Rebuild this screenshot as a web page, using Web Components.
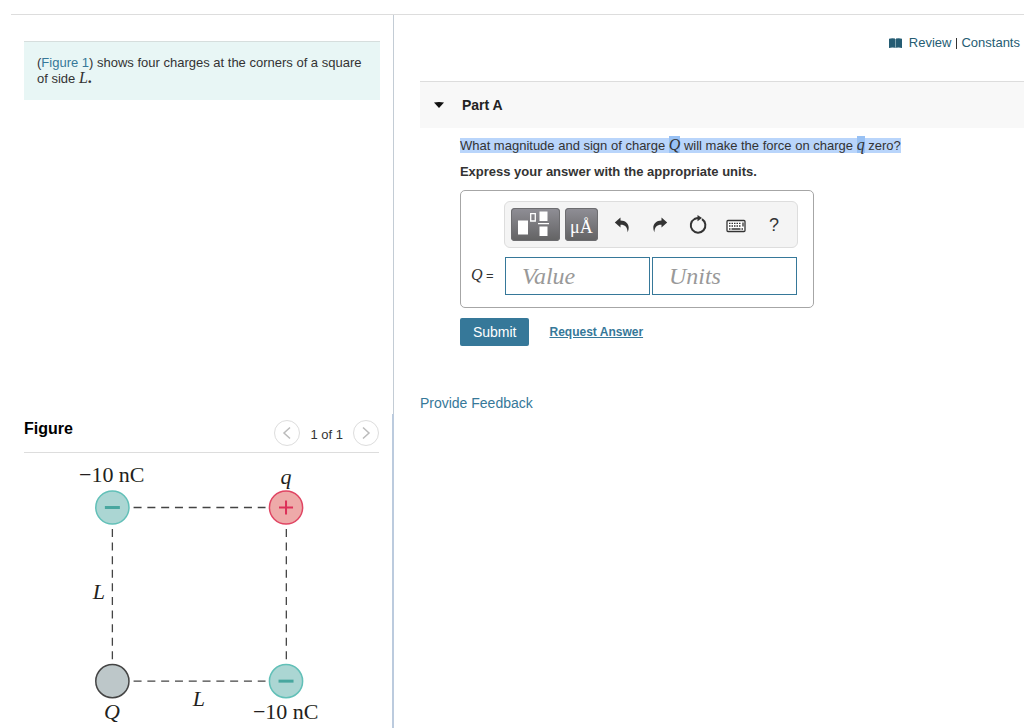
<!DOCTYPE html>
<html lang="en">
<head>
<meta charset="utf-8">
<meta name="viewport" content="width=device-width, initial-scale=1">
<title>Part A</title>
<style>
	body {
		margin: 0;
		background: #fff;
		color: #333;
		font: 13px/16px "Liberation Sans", Arial, sans-serif;
	}
	a {
		color: #367899;
		text-decoration: none;
	}
</style>
</head>
<body>
<problem-page>
	<intro-box slot="intro">(<a href="#figure">Figure 1</a>) shows four charges at the corners of a square of side <math-var>L</math-var><math-var upright>.</math-var></intro-box>
	<figure-panel slot="figure" id="figure" heading="Figure" page="1" total="1">
		<charge-diagram></charge-diagram>
	</figure-panel>
	<page-tools></page-tools>
	<part-section heading="Part A">
		<selected-text slot="question">What magnitude and sign of charge <math-var selected>Q</math-var> will make the force on charge <math-var selected>q</math-var> zero?</selected-text>
		<span slot="instructions">Express your answer with the appropriate units.</span>
		<answer-form variable="Q"></answer-form>
	</part-section>
	<feedback-link>Provide Feedback</feedback-link>
</problem-page>

<script>
class ProblemPage extends HTMLElement {
	constructor() {
		super();
		this.attachShadow({ mode: 'open' });
		this.shadowRoot.innerHTML = `
			<style>
				:host {
					display: grid;
					grid-template-columns: minmax(380px, 37.8%) minmax(0, 1fr);
					box-sizing: border-box;
					min-height: calc(100vh - 14px);
					margin: 14px 0 0 11px;
					border-top: 1px solid #ddd;
				}
				aside {
					display: flex;
					flex-direction: column;
				}
				#intro {
					flex: 1;
					padding: 26px 13px;
					border-right: 1px solid #c3ccd5;
				}
				#figure {
					padding: 0 13px;
					border-right: 2px solid #bccbde;
				}
				main {
					padding-left: 26px;
				}
			</style>
			<aside>
				<div id="intro"><slot name="intro"></slot></div>
				<div id="figure"><slot name="figure"></slot></div>
			</aside>
			<main><slot></slot></main>
		`;
	}
}

class IntroBox extends HTMLElement {
	constructor() {
		super();
		this.attachShadow({ mode: 'open' });
		this.shadowRoot.innerHTML = `
			<style>
				:host {
					display: block;
					padding: 13px;
					border-top: 1px solid #d6dedd;
					background: #e8f6f5;
				}
			</style>
			<slot></slot>
		`;
	}
}

class MathVar extends HTMLElement {
	constructor() {
		super();
		this.attachShadow({ mode: 'open' });
		// no whitespace round the slot: it would show inside a sentence
		this.shadowRoot.innerHTML = `<style>
				:host {
					display: inline;
					font-family: "Liberation Serif", "Times New Roman", serif;
					font-size: 16px;
					font-style: italic;
					line-height: 1px;
				}
				:host([upright]) {
					font-style: normal;
					font-weight: bold;
				}
				:host([selected]) {
					background: #98c1f4;
				}
			</style><slot></slot>`;
	}
}

class SelectedText extends HTMLElement {
	constructor() {
		super();
		this.attachShadow({ mode: 'open' });
		this.shadowRoot.innerHTML = `<style>
				:host {
					display: inline;
					background: #b9d5fb;
				}
			</style><slot></slot>`;
	}
}

class FigurePanel extends HTMLElement {
	constructor() {
		super();
		this.attachShadow({ mode: 'open' });
		this.shadowRoot.innerHTML = `
			<style>
				:host {
					display: block;
				}
				header {
					display: flex;
					align-items: center;
					justify-content: space-between;
					padding: 6px 0;
					border-bottom: 1px solid #ddd;
				}
				h2 {
					margin: 0 0 8px;
					color: #000;
					font-size: 16px;
					line-height: 18px;
				}
				nav {
					display: flex;
					align-items: center;
					gap: 10px;
				}
				button {
					display: grid;
					place-items: center;
					width: 26px;
					height: 26px;
					padding: 0;
					border: 1px solid #ddd;
					border-radius: 50%;
					background: #fff;
				}
				svg {
					width: 12px;
					height: 14px;
					fill: none;
					stroke: #bbb;
					stroke-width: 1.5;
				}
				span {
					padding-top: 3px;
				}
			</style>
			<header>
				<h2></h2>
				<nav>
					<button type="button" aria-label="Previous figure"><svg viewBox="0 0 12 14"><path d="M9 1.500L3 7l6 5.500"/></svg></button>
					<span></span>
					<button type="button" aria-label="Next figure"><svg viewBox="0 0 12 14"><path d="M3 1.500L9 7l-6 5.500"/></svg></button>
				</nav>
			</header>
			<slot></slot>
		`;
	}

	connectedCallback() {
		this.shadowRoot.querySelector('h2').textContent = this.getAttribute('heading');
		this.shadowRoot.querySelector('span').textContent =
			`${this.getAttribute('page')} of ${this.getAttribute('total')}`;
	}
}

class ChargeDiagram extends HTMLElement {
	constructor() {
		super();
		this.attachShadow({ mode: 'open' });
		this.shadowRoot.innerHTML = `
			<style>
				:host {
					display: block;
				}
				svg {
					display: block;
					width: 355px;
					max-width: 100%;
				}
				text {
					fill: #231f20;
					font: 22px "Liberation Serif", "Times New Roman", serif;
				}
				.var {
					font-style: italic;
					text-anchor: middle;
				}
				.side {
					stroke: #444;
					stroke-width: 1.3;
				}
				g {
					stroke-width: 1.5;
				}
				.negative circle {
					fill: #abd6d3;
					stroke: #62c0b8;
				}
				.negative path {
					stroke: #48a79f;
					stroke-width: 3;
				}
				.positive circle {
					fill: #eeaaa9;
					stroke: #e04563;
				}
				.positive path {
					stroke: #dc3059;
					stroke-width: 2;
				}
				.unknown circle {
					fill: #bdc7c9;
					stroke: #444;
				}
			</style>
			<svg viewBox="0 0 355 275" role="img" aria-label="Four charges at the corners of a square">
				<path class="side" stroke-dasharray="8 5.8" d="M109.6 54.5h132M109.6 228.2h132"/>
				<path class="side" stroke-dasharray="8 5.6" d="M88.4 76v131M262.4 76v131"/>
				<g class="negative" transform="translate(88.4 54.5)"><circle r="16.6"/><path d="M-7.5 0h15"/></g>
				<g class="positive" transform="translate(262.1 54.5)"><circle r="16.6"/><path d="M-7 0H7M0-7V7"/></g>
				<g class="unknown" transform="translate(88.4 228.2)"><circle r="16.6"/></g>
				<g class="negative" transform="translate(262.1 228.2)"><circle r="16.6"/><path d="M-7.5 0h15"/></g>
				<text x="55" y="29">−10 nC</text>
				<text class="var" x="262" y="31">q</text>
				<text class="var" x="75" y="146">L</text>
				<text class="var" x="175" y="253">L</text>
				<text class="var" x="88" y="266">Q</text>
				<text x="229" y="266">−10 nC</text>
			</svg>
		`;
	}
}

class PageTools extends HTMLElement {
	constructor() {
		super();
		this.attachShadow({ mode: 'open' });
		this.shadowRoot.innerHTML = `
			<style>
				:host {
					display: flex;
					align-items: center;
					justify-content: flex-end;
					gap: 4px;
					padding: 20px 4px 30px 0;
				}
				a {
					color: #255c73;
					text-decoration: none;
				}
				svg {
					width: 13px;
					height: 11px;
					margin-right: 3px;
				}
				span {
					width: 1px;
					height: 11px;
					margin-left: 1px;
					background: #333;
				}
			</style>
			<svg viewBox="0 0 13 11"><path fill="#255c73" d="M0 .8Q3-.4 6 .6V9.800Q3 9 0 10zM7 .6Q10-.4 13 .8V10Q10 9 7 9.800z"/><path stroke="#7fa3b0" d="M6.500 1v9"/></svg>
			<a href="#review">Review</a>
			<span></span>
			<a href="#constants">Constants</a>
		`;
	}
}

class PartSection extends HTMLElement {
	constructor() {
		super();
		this.attachShadow({ mode: 'open' });
		this.shadowRoot.innerHTML = `
			<style>
				:host {
					display: block;
				}
				h2 {
					margin: 0;
					border-top: 1px solid #ddd;
					background: #f8f8f8;
				}
				button {
					display: flex;
					align-items: center;
					gap: 18px;
					width: 100%;
					padding: 15px 14px;
					border: 0;
					background: none;
					color: #222;
					font: bold 14px/16px "Liberation Sans", Arial, sans-serif;
				}
				svg {
					width: 10px;
					height: 6px;
				}
				#body {
					padding: 10px 0 0 40px;
				}
				p {
					margin: 0 0 10px;
				}
				#instructions {
					font-weight: bold;
				}
			</style>
			<h2>
				<button type="button" aria-expanded="true">
					<svg viewBox="0 0 10 6"><path fill="#111" d="M0 .5Q5-.5 10 .5L5 6z"/></svg>
					<span></span>
				</button>
			</h2>
			<div id="body">
				<p><slot name="question"></slot></p>
				<p id="instructions"><slot name="instructions"></slot></p>
				<slot></slot>
			</div>
		`;

		this.shadowRoot.querySelector('button').addEventListener('click', this._toggle.bind(this));
	}

	connectedCallback() {
		this.shadowRoot.querySelector('h2 span').textContent = this.getAttribute('heading');
	}

	_toggle() {
		const body = this.shadowRoot.querySelector('#body');
		body.hidden = !body.hidden;
		this.shadowRoot.querySelector('button').setAttribute('aria-expanded', String(!body.hidden));
	}
}

class MathToolbar extends HTMLElement {
	constructor() {
		super();
		this.attachShadow({ mode: 'open' });
		this.shadowRoot.innerHTML = `
			<style>
				:host {
					display: flex;
					align-items: center;
					gap: 5px;
					padding: 6px 4px 6px 6px;
					border: 1px solid #ddd;
					border-radius: 6px;
					background: #f4f4f4;
				}
				button {
					display: grid;
					place-items: center;
					height: 33px;
					padding: 0;
					border: 0;
					background: none;
					color: #333;
					font: 18px/20px "Liberation Sans", Arial, sans-serif;
				}
				.key {
					border-radius: 4px;
					background: linear-gradient(#908f96, #626263);
					box-shadow: inset 0 0 0 1px #6d6d70;
					color: #fff;
				}
				#templates {
					width: 49px;
				}
				#symbols {
					width: 33px;
					padding-top: 4px;
					font-family: "Liberation Serif", "Times New Roman", serif;
				}
				#actions {
					display: grid;
					grid-template-columns: repeat(5, 1fr);
					flex: 1;
				}
				svg {
					display: block;
				}
			</style>
			<button type="button" id="templates" class="key" aria-label="Templates">
				<svg width="49" height="33" viewBox="0 0 49 33"><path fill="#fff" d="M7 12.500h10v14H7zM28.500 3.500h8v9.500h-8zM28.500 18.500h8V28h-8zM27 15h11v1.300H27z"/><path fill="none" stroke="#fff" stroke-width="1.300" d="M19.700 5.700h4.600v7.300h-4.600z"/></svg>
			</button>
			<button type="button" id="symbols" class="key">μÅ</button>
			<div id="actions">
				<button type="button" aria-label="Undo">
					<svg width="16" height="16" viewBox="0 0 16 16"><path fill="#333" d="M6.500 .5L.8 5.500l5.700 5V7.700c4.500-.1 6.800 1.800 7.100 7.500C16.500 9 13.500 3.600 6.500 3.400z"/></svg>
				</button>
				<button type="button" aria-label="Redo">
					<svg width="16" height="16" viewBox="0 0 16 16"><path fill="#333" d="M9.500 .5l5.700 5-5.700 5V7.700c-4.500-.1-6.800 1.800-7.100 7.500C-.5 9 2.500 3.600 9.500 3.400z"/></svg>
				</button>
				<button type="button" aria-label="Reset">
					<svg width="18" height="20" viewBox="0 0 18 20"><path fill="none" stroke="#333" stroke-width="2" d="M13 4.200A7.300 7.300 0 1 1 5.500 4Q7.500 3 10 3"/><path fill="#333" d="M8.500 0l4.500 3-4.500 3.200z"/></svg>
				</button>
				<button type="button" aria-label="Keyboard shortcuts">
					<svg width="20" height="16" viewBox="0 0 20 16"><rect x="1" y="3.500" width="18" height="11" rx="1" fill="#fff" stroke="#333" stroke-width="1.300"/><path fill="none" stroke="#333" stroke-width="1.300" d="M3 6.300h12.500M3 9h12.500" stroke-dasharray="1.500 1"/><path fill="none" stroke="#333" stroke-width="1.300" d="M17 5.500V9.500M3 12h1.500M5.500 12h9M15.500 12H17"/></svg>
				</button>
				<button type="button">?</button>
			</div>
		`;
	}
}

class AnswerForm extends HTMLElement {
	constructor() {
		super();
		this.attachShadow({ mode: 'open' });
		this.shadowRoot.innerHTML = `
			<style>
				:host {
					display: block;
				}
				#box {
					display: grid;
					grid-template-columns: 33px 294px;
					gap: 9px 0;
					align-items: center;
					width: fit-content;
					padding: 10px 15px 12px 10px;
					border: 1px solid #a6a6a6;
					border-radius: 5px;
				}
				math-toolbar {
					grid-column: 2;
				}
				#fields {
					display: grid;
					grid-template-columns: 1fr 1fr;
					gap: 2px;
					padding: 0 1px;
				}
				input {
					box-sizing: border-box;
					width: 100%;
					min-width: 0;
					height: 38px;
					padding: 0 16px;
					border: 1px solid #367899;
					border-radius: 0;
					background: #fff;
					font: italic 24px "Liberation Serif", "Times New Roman", serif;
				}
				input::placeholder {
					color: #999;
				}
				#actions {
					display: flex;
					align-items: center;
					gap: 20px;
					margin-top: 10px;
				}
				#submit {
					height: 28px;
					padding: 0 13px;
					border: 0;
					border-radius: 2px;
					background: #367899;
					color: #fff;
					font: 14px/16px "Liberation Sans", Arial, sans-serif;
				}
				a {
					color: #367899;
					font-size: 12px;
					font-weight: bold;
				}
			</style>
			<form>
				<div id="box">
					<math-toolbar></math-toolbar>
					<label for="value"><math-var></math-var> =</label>
					<div id="fields">
						<input id="value" type="text" placeholder="Value">
						<input id="units" type="text" placeholder="Units" aria-label="Units">
					</div>
				</div>
				<div id="actions">
					<button id="submit" type="submit">Submit</button>
					<a href="#answer">Request Answer</a>
				</div>
			</form>
		`;

		this.shadowRoot.querySelector('form').addEventListener('submit', this._submit.bind(this));
	}

	connectedCallback() {
		this.shadowRoot.querySelector('math-var').textContent = this.getAttribute('variable');
	}

	_submit(event) {
		event.preventDefault();
	}
}

class FeedbackLink extends HTMLElement {
	constructor() {
		super();
		this.attachShadow({ mode: 'open' });
		this.shadowRoot.innerHTML = `
			<style>
				:host {
					display: block;
					padding-top: 49px;
					font-size: 14px;
				}
				a {
					color: #367899;
					text-decoration: none;
				}
			</style>
			<a href="#feedback"><slot></slot></a>
		`;
	}
}

customElements.define('problem-page', ProblemPage);
customElements.define('intro-box', IntroBox);
customElements.define('math-var', MathVar);
customElements.define('selected-text', SelectedText);
customElements.define('figure-panel', FigurePanel);
customElements.define('charge-diagram', ChargeDiagram);
customElements.define('page-tools', PageTools);
customElements.define('part-section', PartSection);
customElements.define('math-toolbar', MathToolbar);
customElements.define('answer-form', AnswerForm);
customElements.define('feedback-link', FeedbackLink);
</script>
</body>
</html>
